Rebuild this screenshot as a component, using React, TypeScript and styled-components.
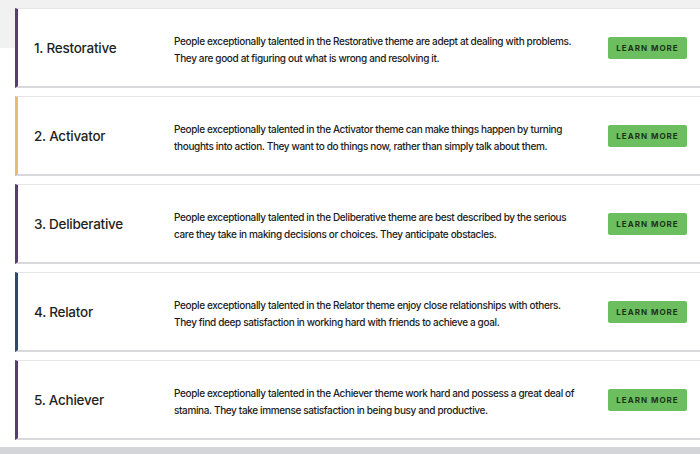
import React from 'react'
import styled, { createGlobalStyle } from 'styled-components'

const GlobalStyle = createGlobalStyle`
  html, body {
    margin: 0;
    padding: 0;
    background: #ffffff;
    overflow: hidden;
  }
  body {
    font-family: Inter, "Noto Sans", "Liberation Sans", sans-serif;
    -webkit-font-smoothing: antialiased;
  }
`

type Theme = {
  rank: number
  name: string
  color: string
  lines: string[]
}

const themes: Theme[] = [
  {
    rank: 1,
    name: 'Restorative',
    color: '#573e70',
    lines: [
      'People exceptionally talented in the Restorative theme are adept at dealing with problems.',
      'They are good at figuring out what is wrong and resolving it.'
    ]
  },
  {
    rank: 2,
    name: 'Activator',
    color: '#e6bd6c',
    lines: [
      'People exceptionally talented in the Activator theme can make things happen by turning',
      'thoughts into action. They want to do things now, rather than simply talk about them.'
    ]
  },
  {
    rank: 3,
    name: 'Deliberative',
    color: '#573e70',
    lines: [
      'People exceptionally talented in the Deliberative theme are best described by the serious',
      'care they take in making decisions or choices. They anticipate obstacles.'
    ]
  },
  {
    rank: 4,
    name: 'Relator',
    color: '#2d4a6c',
    lines: [
      'People exceptionally talented in the Relator theme enjoy close relationships with others.',
      'They find deep satisfaction in working hard with friends to achieve a goal.'
    ]
  },
  {
    rank: 5,
    name: 'Achiever',
    color: '#573e70',
    lines: [
      'People exceptionally talented in the Achiever theme work hard and possess a great deal of',
      'stamina. They take immense satisfaction in being busy and productive.'
    ]
  }
]

const Page = styled.div`
  height: 454px;
  display: flex;
  flex-direction: column;
  background: linear-gradient(#f1f1f2 0, #f1f1f2 48px, #ffffff 48px);
`

const List = styled.div`
  display: flex;
  flex-direction: column;
  gap: 8px;
  padding: 8px 0 0 15px;
  flex: 1;
`

const Card = styled.div<{ $accent: string }>`
  height: 80px;
  box-sizing: border-box;
  margin-right: -12px;
  display: flex;
  align-items: center;
  background: #ffffff;
  border-left: 3px solid ${p => p.$accent};
  border-top: 1px solid #e4e4e6;
  border-bottom: 2px solid #d9d9dc;
`

const Title = styled.div`
  width: 156px;
  padding-left: 16px;
  box-sizing: border-box;
  flex-shrink: 0;
  font-size: 13.5px;
  font-weight: 500;
  color: #1f1f22;
  letter-spacing: -0.25px;
`

const Description = styled.div`
  width: 434px;
  flex-shrink: 0;
  display: flex;
  flex-direction: column;
  gap: 3px;
  margin-top: 3px;
  font-size: 10px;
  font-weight: 500;
  color: #1c1c20;
  letter-spacing: -0.36px;
  line-height: 14px;
`

const Line = styled.span`
  white-space: nowrap;
`

const LearnButton = styled.button`
  width: 79px;
  height: 22px;
  border: none;
  border-radius: 2px;
  background: #6cbf5e;
  color: #1a331b;
  font-family: inherit;
  font-size: 8px;
  font-weight: 700;
  letter-spacing: 1px;
  padding: 0;
  cursor: pointer;
`

const BottomBar = styled.div`
  height: 7px;
  background: #d3d5d9;
`

export default function App() {
  return (
    <>
      <GlobalStyle />
      <Page>
        <List>
          {themes.map(t => (
            <Card key={t.rank} $accent={t.color}>
              <Title>
                {t.rank}. {t.name}
              </Title>
              <Description>
                {t.lines.map(l => (
                  <Line key={l}>{l}</Line>
                ))}
              </Description>
              <LearnButton>LEARN MORE</LearnButton>
            </Card>
          ))}
        </List>
        <BottomBar />
      </Page>
    </>
  )
}
